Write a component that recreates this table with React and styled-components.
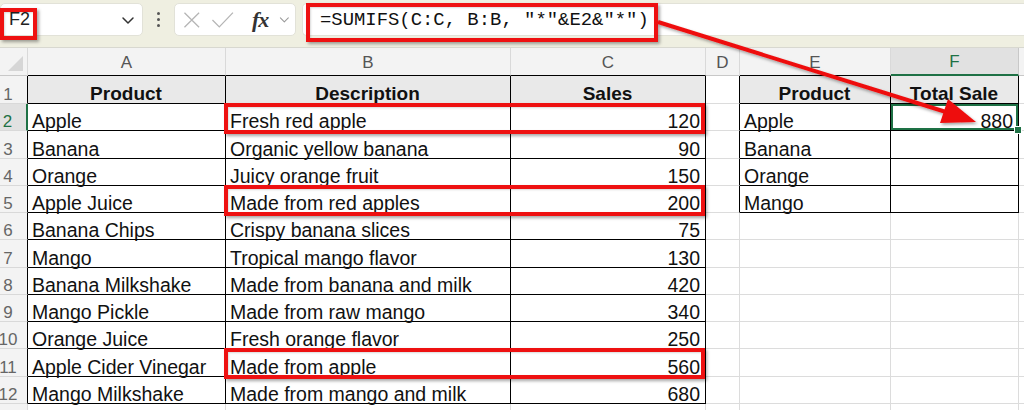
import React from 'react';
import styled, { createGlobalStyle, css } from 'styled-components';

const GlobalStyle = createGlobalStyle`
  html, body { margin: 0; padding: 0; background: #fff; overflow: hidden; }
  body { font-family: "Liberation Sans", Arial, sans-serif; }
`;

const RED = '#ee1111';
const GREEN = '#1e7145';
const GRID = '#dcdcdc';
const INK = '#111';

const Page = styled.div`
  position: relative;
  width: 1024px;
  height: 410px;
  overflow: hidden;
  background: #fff;
`;

const Toolbar = styled.div`
  display: flex;
  align-items: flex-start;
  height: 48px;
  box-sizing: border-box;
  padding-top: 3px;
  background: #efefe1;
  border-bottom: 1px solid #d8d8d0;
`;

const Box = styled.div`
  box-sizing: border-box;
  height: 33px;
  background: #fff;
  border: 1px solid #e2e2d8;
  border-radius: 5px;
  display: flex;
  align-items: center;
`;

const NameBox = styled(Box)`
  width: 143px;
  padding: 0 6px 0 8px;
  justify-content: space-between;
  font-size: 18px;
  color: #222;
`;

const Dots = styled.div`
  width: 31px;
  height: 33px;
  display: flex;
  flex-direction: column;
  align-items: center;
  justify-content: center;
  gap: 3px;
  span { width: 3px; height: 3px; border-radius: 50%; background: #555; }
`;

const FxBox = styled(Box)`
  width: 122px;
  padding: 0 4px 0 8px;
  gap: 10px;
`;

const Fx = styled.span`
  font-family: "Liberation Serif", "Times New Roman", serif;
  font-style: italic;
  font-weight: 700;
  font-size: 22px;
  color: #333;
  margin-left: 8px;
  letter-spacing: -1px;
`;

const FormulaBox = styled(Box)`
  flex: 1;
  margin-left: 6px;
  border-right: none;
  border-radius: 5px 0 0 5px;
  padding-left: 17px;
  font-family: "Liberation Mono", "Courier New", monospace;
  font-size: 18.9px;
  color: #111;
  white-space: pre;
`;

const Sheet = styled.div`
  position: relative;
  display: grid;
  grid-template-columns: 28px 198px 285px 195px 34px 151px 128px 1fr;
  grid-template-rows: 28px 28px repeat(12, 27.27px);
`;

const Cell = styled.div`
  box-sizing: border-box;
  position: relative;
  border-right: 1px solid ${p => p.$r};
  border-bottom: 1px solid ${p => p.$b};
  background: ${p => p.$bg};
  display: flex;
  align-items: flex-end;
  justify-content: ${p => p.$align};
  padding: 0 5px ${p => (p.$bold ? '0' : '2px')} 4px;
  font-size: ${p => (p.$bold ? '19px' : '19.5px')};
  line-height: ${p => (p.$bold ? '18px' : '14px')};
  color: ${INK};
  font-weight: ${p => (p.$bold ? 700 : 400)};
  white-space: nowrap;
  overflow: visible;
  ${p => p.$selected && css`box-shadow: inset 0 0 0 2px ${GREEN};`}
`;

const ColHead = styled.div`
  box-sizing: border-box;
  border-right: 1px solid ${p => (p.$active ? '#c8c8c8' : '#d9d9d9')};
  border-bottom: ${p => (p.$active ? `2px solid ${GREEN}` : `1px solid ${p.$b}`)};
  background: ${p => (p.$active ? '#e1e1e1' : '#f3f3f3')};
  color: ${p => (p.$active ? GREEN : '#555')};
  display: flex;
  align-items: center;
  justify-content: center;
  font-size: 17px;
  padding-top: 2px;
`;

const Corner = styled.div`
  box-sizing: border-box;
  position: relative;
  border-right: 1px solid #d9d9d9;
  border-bottom: 1px solid #c8c8c8;
  background: #f3f3f3;
  &::after {
    content: '';
    position: absolute;
    right: 4px;
    bottom: 4px;
    border-style: solid;
    border-width: 0 0 15px 15px;
    border-color: transparent transparent #d6d6d6 transparent;
  }
`;

const RowHead = styled.div`
  box-sizing: border-box;
  border-right: ${p => (p.$active ? `2px solid ${GREEN}` : `1px solid ${p.$r}`)};
  border-bottom: 1px solid #d9d9d9;
  background: ${p => (p.$active ? '#e1e1e1' : '#f3f3f3')};
  color: ${p => (p.$active ? GREEN : '#666')};
  display: flex;
  align-items: flex-end;
  justify-content: center;
  padding: 0 11px 1px 0;
  font-size: 17px;
  line-height: 15px;
`;

const Handle = styled.span`
  position: absolute;
  right: -4px;
  bottom: -4px;
  width: 6px;
  height: 6px;
  background: ${GREEN};
  border: 1px solid #fff;
  z-index: 2;
`;

const RedBox = styled.div`
  position: absolute;
  box-sizing: border-box;
  border: 4px solid ${RED};
  box-shadow: 2px 2px 3px rgba(0, 0, 0, 0.35), inset 1px 1px 2px rgba(0, 0, 0, 0.15);
  pointer-events: none;
  z-index: 5;
`;

const ArrowLayer = styled.svg`
  position: absolute;
  left: 0;
  top: 0;
  width: 1024px;
  height: 410px;
  pointer-events: none;
  z-index: 6;
`;

const cols = ['A', 'B', 'C', 'D', 'E', 'F', 'G'];

const A = ['Product', 'Apple', 'Banana', 'Orange', 'Apple Juice', 'Banana Chips', 'Mango', 'Banana Milkshake', 'Mango Pickle', 'Orange Juice', 'Apple Cider Vinegar', 'Mango Milkshake', ''];
const B = ['Description', 'Fresh red apple', 'Organic yellow banana', 'Juicy orange fruit', 'Made from red apples', 'Crispy banana slices', 'Tropical mango flavor', 'Made from banana and milk', 'Made from raw mango', 'Fresh orange flavor', 'Made from apple', 'Made from mango and milk', ''];
const C = ['Sales', '120', '90', '150', '200', '75', '130', '420', '340', '250', '560', '680', ''];
const E = ['Product', 'Apple', 'Banana', 'Orange', 'Mango'];
const F = ['Total Sale', '880'];

function inT1(r, c) { return r >= 1 && r <= 12 && c >= 0 && c <= 2; }
function inT2(r, c) { return r >= 1 && r <= 5 && (c === 4 || c === 5); }

function cellValue(r, c) {
  const i = r - 1;
  if (c === 0) return A[i] || '';
  if (c === 1) return B[i] || '';
  if (c === 2) return C[i] || '';
  if (c === 4) return E[i] || '';
  if (c === 5) return F[i] || '';
  return '';
}

// top of a data row inside the sheet (sheet starts below the 48px toolbar)
const rowTop = (r) => 28 + (r === 1 ? 0 : 28 + (r - 2) * 27.27);

function ChevronDown({ size = 14, color = '#444', stroke = 1.6 }) {
  return (
    <svg width={size} height={size} viewBox="0 0 16 16" fill="none">
      <path d="M3 6 L8 11 L13 6" stroke={color} strokeWidth={stroke} strokeLinecap="round" strokeLinejoin="round" />
    </svg>
  );
}

export default function App() {
  const rows = [];
  for (let r = 1; r <= 13; r++) {
    const active = r === 2;
    rows.push(
      <RowHead key={`h${r}`} $active={active} $r={r <= 12 ? '#000' : '#d9d9d9'}>
        {r <= 12 ? r : ''}
      </RowHead>
    );
    cols.forEach((_, c) => {
      const t = inT1(r, c) || inT2(r, c);
      const rightBlack = t || (c === 3 && r <= 5);
      const header = r === 1 && t;
      const numeric = c === 2 || c === 5;
      const selected = r === 2 && c === 5;
      rows.push(
        <Cell
          key={`${r}-${c}`}
          $r={rightBlack ? '#000' : GRID}
          $b={t ? '#000' : GRID}
          $bg={header ? '#e9e9e9' : 'transparent'}
          $bold={header}
          $align={header ? 'center' : numeric ? 'flex-end' : 'flex-start'}
          $selected={selected}
        >
          {cellValue(r, c)}
          {selected && <Handle />}
        </Cell>
      );
    });
  }

  const hl = [2, 5, 11];

  return (
    <Page>
      <GlobalStyle />
      <Toolbar>
        <NameBox>
          <span>F2</span>
          <ChevronDown size={16} color="#333" stroke={1.5} />
        </NameBox>
        <Dots><span /><span /><span /></Dots>
        <FxBox>
          <svg width="18" height="18" viewBox="0 0 18 18" fill="none">
            <path d="M1.5 1.5 L16.5 16.5 M16.5 1.5 L1.5 16.5" stroke="#b5b5b5" strokeWidth="1.3" />
          </svg>
          <svg width="24" height="18" viewBox="0 0 24 18" fill="none">
            <path d="M1.5 9 L8.5 16 L22.5 1.5" stroke="#b5b5b5" strokeWidth="1.3" />
          </svg>
          <Fx>fx</Fx>
          <ChevronDown size={13} color="#999" stroke={1.3} />
        </FxBox>
        <FormulaBox>=SUMIFS(C:C, B:B, "*"&amp;E2&amp;"*")</FormulaBox>
      </Toolbar>
      <Sheet>
        <Corner />
        {cols.map((l, c) => (
          <ColHead
            key={l}
            $active={l === 'F'}
            $b={inT1(1, c) || inT2(1, c) ? '#000' : '#c8c8c8'}
          >
            {l === 'G' ? '' : l}
          </ColHead>
        ))}
        {rows}
        {hl.map((r) => (
          <RedBox key={r} style={{ left: 224, top: rowTop(r) - 1, width: 481, height: 31 }} />
        ))}
      </Sheet>
      <RedBox style={{ left: 0, top: 8, width: 37, height: 32 }} />
      <RedBox style={{ left: 306, top: 3, width: 352, height: 39 }} />
      <ArrowLayer viewBox="0 0 1024 410">
        <defs>
          <filter id="sh" x="-10%" y="-10%" width="130%" height="140%">
            <feDropShadow dx="1.5" dy="2" stdDeviation="1.5" floodColor="#000" floodOpacity="0.35" />
          </filter>
        </defs>
        <g filter="url(#sh)">
          <line x1="658" y1="22" x2="946" y2="112" stroke={RED} strokeWidth="4" />
          <polygon points="976,122 940,123 948,99" fill={RED} />
        </g>
      </ArrowLayer>
    </Page>
  );
}
